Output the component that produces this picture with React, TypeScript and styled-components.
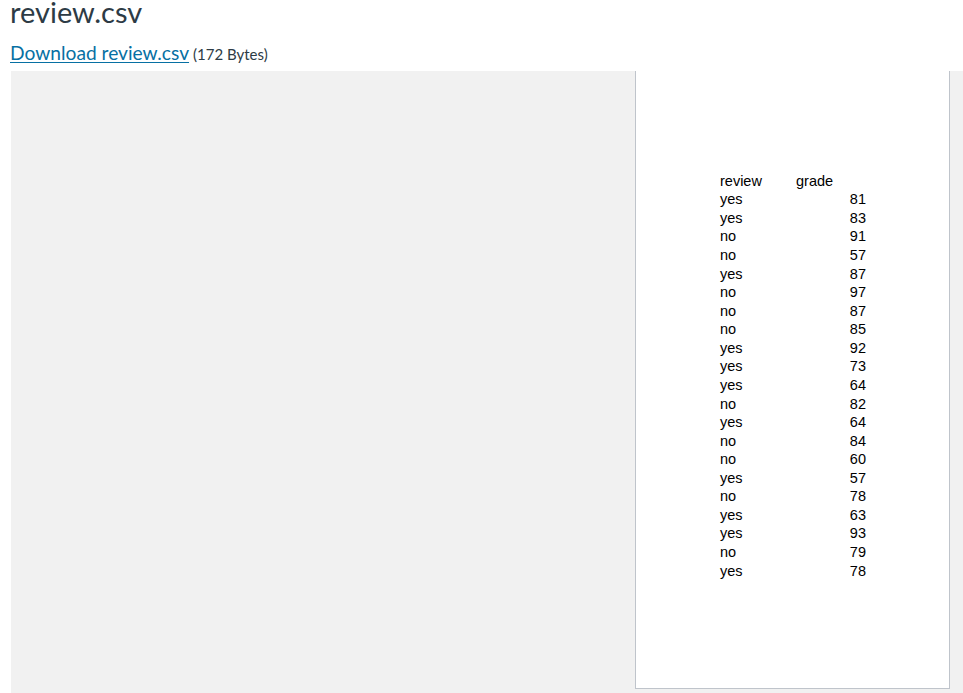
import styled, { createGlobalStyle } from "styled-components";

const GlobalStyle = createGlobalStyle`
  html, body {
    margin: 0;
    padding: 0;
    background: #ffffff;
    overflow: hidden;
  }
  body {
    font-family: Lato, "Liberation Sans", sans-serif;
    color: #2d3b45;
  }
`;

const rows: [string, number][] = [
  ["yes", 81],
  ["yes", 83],
  ["no", 91],
  ["no", 57],
  ["yes", 87],
  ["no", 97],
  ["no", 87],
  ["no", 85],
  ["yes", 92],
  ["yes", 73],
  ["yes", 64],
  ["no", 82],
  ["yes", 64],
  ["no", 84],
  ["no", 60],
  ["yes", 57],
  ["no", 78],
  ["yes", 63],
  ["yes", 93],
  ["no", 79],
  ["yes", 78],
];

// START page header ------------------------------------
const Page = styled.div`
  height: 693px;
  display: flex;
  flex-direction: column;
  padding-left: 10px;
`;

const FileTitle = styled.h2`
  margin: 0;
  font-size: 29px;
  font-weight: 400;
  line-height: 23.2px;
  color: #2d3b45;
`;

const DownloadLine = styled.div`
  margin-top: 17.6px;
  display: flex;
  align-items: baseline;
  gap: 4px;
  height: 30px;
`;

const DownloadLink = styled.a`
  font-size: 19.2px;
  color: #0770a3;
  text-decoration: underline;
  text-underline-offset: 2px;
`;

const FileSize = styled.span`
  font-size: 15px;
  color: #2d3b45;
`;
// END page header ------------------------------------

// START preview ------------------------------------
const Viewer = styled.div`
  flex: 1;
  margin-left: 1px;
  background: #f1f1f1;
  display: flex;
  justify-content: flex-end;
  padding: 0 13px 4px 0;
  min-height: 0;
`;

const Sheet = styled.div`
  width: 315px;
  background: #ffffff;
  border: 1px solid #bfc4cb;
  border-top: none;
  padding: 101px 0 0 84px;
  box-sizing: border-box;
`;

const Table = styled.div`
  display: grid;
  grid-template-columns: 76px 70px;
  font-family: "Liberation Sans", Arial, sans-serif;
  font-size: 14.5px;
  line-height: 18.57px;
  color: #000000;
`;

const Cell = styled.div<{ $num?: boolean }>`
  text-align: ${(p) => (p.$num ? "right" : "left")};
`;
// END preview ------------------------------------

export default function App() {
  return (
    <>
      <GlobalStyle />
      <Page>
        <FileTitle>review.csv</FileTitle>
        <DownloadLine>
          <DownloadLink href="#">Download review.csv</DownloadLink>
          <FileSize>(172 Bytes)</FileSize>
        </DownloadLine>
        <Viewer>
          <Sheet>
            <Table>
              <Cell>review</Cell>
              <Cell>grade</Cell>
              {rows.map(([r, g], i) => [
                <Cell key={`r${i}`}>{r}</Cell>,
                <Cell key={`g${i}`} $num>
                  {g}
                </Cell>,
              ])}
            </Table>
          </Sheet>
        </Viewer>
      </Page>
    </>
  );
}
